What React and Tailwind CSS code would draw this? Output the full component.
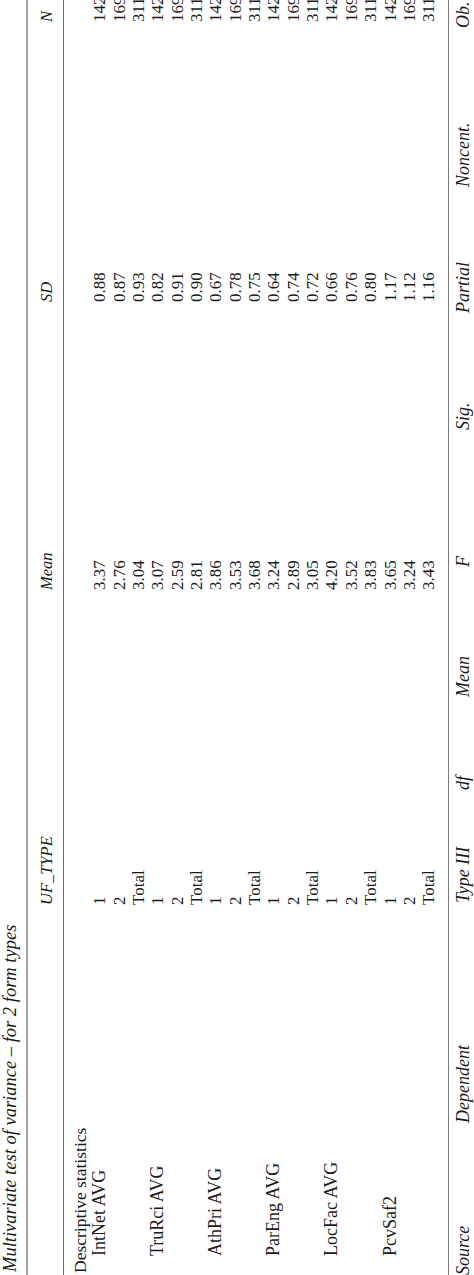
import React from "react";

const groups = [
  { label: "IntNet AVG", rows: [["1", "3.37", "0.88", "142"], ["2", "2.76", "0.87", "169"], ["Total", "3.04", "0.93", "311"]] },
  { label: "TruRci AVG", rows: [["1", "3.07", "0.82", "142"], ["2", "2.59", "0.91", "169"], ["Total", "2.81", "0.90", "311"]] },
  { label: "AthPri AVG", rows: [["1", "3.86", "0.67", "142"], ["2", "3.53", "0.78", "169"], ["Total", "3.68", "0.75", "311"]] },
  { label: "ParEng AVG", rows: [["1", "3.24", "0.64", "142"], ["2", "2.89", "0.74", "169"], ["Total", "3.05", "0.72", "311"]] },
  { label: "LocFac AVG", rows: [["1", "4.20", "0.66", "142"], ["2", "3.52", "0.76", "169"], ["Total", "3.83", "0.80", "311"]] },
  { label: "PcvSaf2", rows: [["1", "3.65", "1.17", "142"], ["2", "3.24", "1.12", "169"], ["Total", "3.43", "1.16", "311"]] },
];

const serif = "font-['Liberation_Serif','Times_New_Roman',serif]";

const footer = [
  ["Source", "w-[152px]"],
  ["Dependent", "w-[220px]"],
  ["Type III", "w-[113px]"],
  ["df", "w-[93px]"],
  ["Mean", "w-[130px]"],
  ["F", "w-[137px]"],
  ["Sig.", "w-[117px]"],
  ["Partial", "w-[126px]"],
  ["Noncent.", "w-[159px]"],
  ["Ob.", "w-[28px]"],
];

const cols = "grid grid-cols-[370px_315px_288px_280px_22px]";

export default function App() {
  return (
    <div className="w-[474px] h-[1275px] overflow-hidden bg-white">
      <div className={`w-[1275px] h-[474px] origin-top-left translate-y-[1275px] -rotate-90 flex flex-col text-[#1a1a1a] bg-white ${serif}`}>
        {/* title */}
        <div className="h-[26px] pl-[3px] italic text-[18.5px] leading-[21px] whitespace-nowrap">
          Multivariate test of variance – for 2 form types
        </div>
        <div className="h-[2px] bg-[#a2a2a2]" />
        {/* header */}
        <div className={`${cols} h-[35px] items-center pt-[2px] italic text-[16.5px] leading-[20px]`}>
          <div />
          <div>UF_TYPE</div>
          <div>Mean</div>
          <div>SD</div>
          <div className="whitespace-nowrap">N</div>
        </div>
        <div className="h-px bg-[#6a6a6a]" />
        {/* body */}
        <div className="flex-1 flex flex-col pt-[7px]">
          <div className="h-[19.35px] leading-[19.35px] text-[17.5px] whitespace-nowrap pl-[2px]">
            Descriptive statistics
          </div>
          {groups.map((g) =>
            g.rows.map((r, i) => (
              <div key={g.label + i} className={`${cols} h-[19.35px] leading-[19.35px] text-[17px] whitespace-nowrap`}>
                <div className="text-[18px] pl-[19px]">{i === 0 ? g.label : ""}</div>
                <div>{r[0]}</div>
                <div>{r[1]}</div>
                <div>{r[2]}</div>
                <div>{r[3]}</div>
              </div>
            ))
          )}
        </div>
        <div className="h-px bg-[#7a7a7a]" />
        {/* footer header */}
        <div className="flex h-[25px] pt-[4px] italic text-[18px] leading-[21px] whitespace-nowrap">
          {footer.map(([t, w]) => (
            <div key={t} className={`${w} shrink-0`}>{t}</div>
          ))}
        </div>
      </div>
    </div>
  );
}
